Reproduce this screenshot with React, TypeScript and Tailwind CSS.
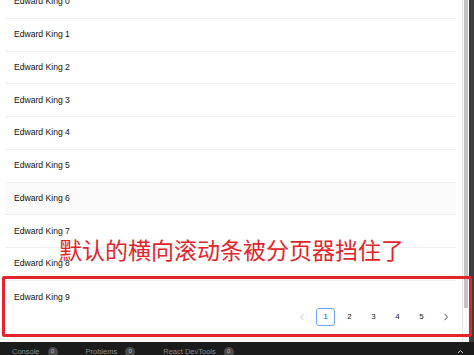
import React from 'react';

const rows = Array.from({ length: 10 }, (_, i) => `Edward King ${i}`);

const Badge = ({ n }: { n: number }) => (
  <span className="ml-[8px] inline-flex h-[10px] w-[10px] items-center justify-center rounded-full bg-[#4a4a4a] text-[6px] text-[#bdbdbd]">
    {n}
  </span>
);

export default function App() {
  return (
    <div
      className="relative h-[355px] w-[474px] overflow-hidden bg-white"
      style={{ fontFamily: '"Liberation Sans", Arial, sans-serif' }}
    >
      <div className="flex h-[342px]">
        {/* table + pager */}
        <div className="flex-1 overflow-hidden">
          <div className="-mt-[14px] ml-[5px] w-[451px]">
            {rows.map((name, i) => (
              <div
                key={name}
                className={`flex h-[32.75px] items-center pl-[9px] text-[8.6px] text-[#111] ${
                  i < 9 ? 'border-b border-[#f0f0f0]' : ''
                } ${i === 6 ? 'bg-[#fafafa]' : 'bg-white'}`}
              >
                {name}
              </div>
            ))}
          </div>

          {/* pagination */}
          <div className="-mt-[6px] flex items-center justify-end gap-[5px] pr-[7px] text-[8px] text-[#222]">
            <span className="flex h-[18px] w-[19px] items-center justify-center text-[#c8c8c8]">
              <svg width="6" height="8" viewBox="0 0 6 8" fill="none" stroke="currentColor" strokeWidth="1">
                <path d="M4.5 0.8L1.5 4l3 3.2" />
              </svg>
            </span>
            <span className="flex h-[18px] w-[19px] items-center justify-center rounded-[3px] border border-[#69a7ff] font-bold text-[#4096ff]">
              1
            </span>
            {[2, 3, 4, 5].map((n) => (
              <span key={n} className="flex h-[18px] w-[19px] items-center justify-center">
                {n}
              </span>
            ))}
            <span className="flex h-[18px] w-[19px] items-center justify-center text-[#555]">
              <svg width="6" height="8" viewBox="0 0 6 8" fill="none" stroke="currentColor" strokeWidth="1">
                <path d="M1.5 0.8L4.5 4l-3 3.2" />
              </svg>
            </span>
          </div>
        </div>

        {/* vertical scrollbar */}
        <div className="flex w-[7px] flex-col border-l border-[#e6e6e6] bg-[#fafafa]">
          <div className="mx-auto h-[308px] w-[4px] bg-[#c4c4c4]" />
        </div>
        <div className="w-[5px] bg-[#3d3d3d]" />
      </div>

      {/* bottom panel tabs */}
      <div className="flex h-[13px] items-start bg-[#1b1b1b] pl-[12px] pt-[4px] text-[7.5px] text-[#8a8a8a]">
        <span className="flex items-center">
          Console
          <Badge n={0} />
        </span>
        <span className="ml-[28px] flex items-center">
          Problems
          <Badge n={0} />
        </span>
        <span className="ml-[28px] flex items-center">
          React DevTools
          <Badge n={0} />
        </span>
        <span className="ml-auto mr-[10px] mt-[3px] text-[#cfcfcf]">
          <svg width="7" height="5" viewBox="0 0 7 5" fill="none" stroke="currentColor" strokeWidth="1">
            <path d="M1 4l2.5-2.5L6 4" />
          </svg>
        </span>
      </div>

      {/* annotation overlay */}
      <div
        className="absolute left-[59px] top-[234px] whitespace-nowrap text-[23px] leading-[30px] text-[#e3242b]"
        style={{ fontFamily: '"Noto Sans CJK SC", sans-serif' }}
      >
        默认的横向滚动条被分页器挡住了
      </div>
      <div className="absolute left-[2px] top-[276px] h-[61px] w-[470px] rounded-[2px] border-[3px] border-[#e3242b]" />
    </div>
  );
}
